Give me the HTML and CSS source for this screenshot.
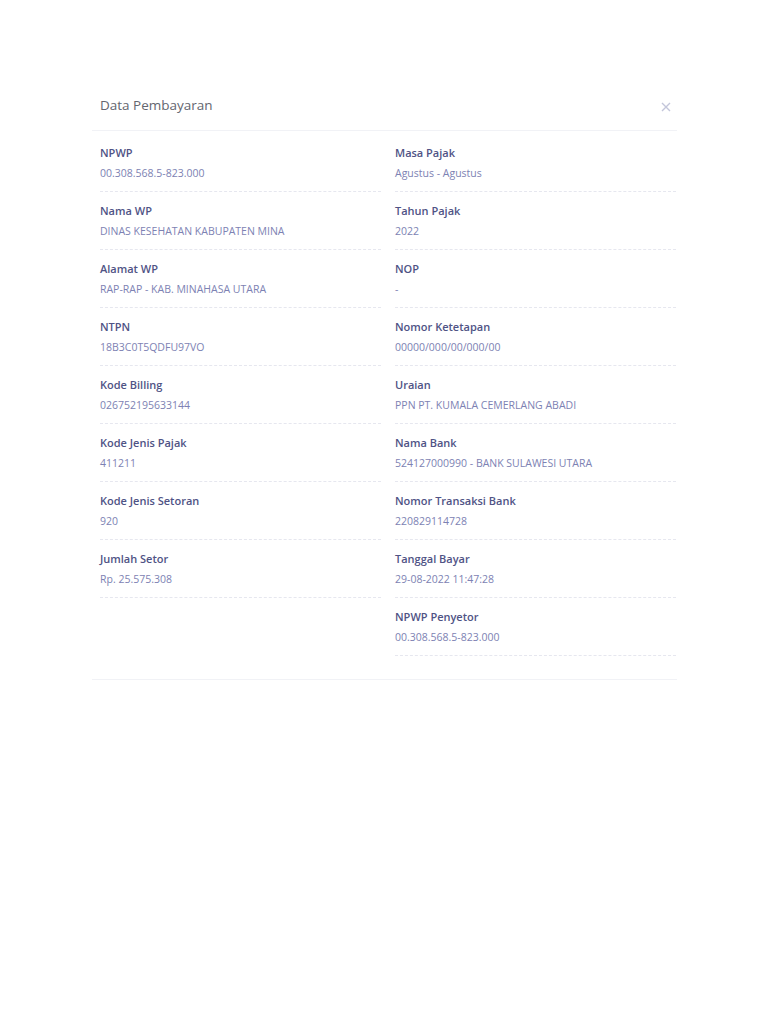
FILE: index.html
```html
<!DOCTYPE html>
<html lang="id">
<head>
    <meta charset="UTF-8">
    <meta name="viewport" content="width=device-width, initial-scale=1.0">
    <title>Data Pembayaran</title>
    <link rel="stylesheet" href="styles.css">
</head>
<body>
    <div class="modal">
        <div class="modal-header">
            <h5 class="modal-title">Data Pembayaran</h5>
            <button class="close" type="button" aria-label="Close">
                <svg width="10" height="10" viewBox="0 0 10 10"><path d="M1 1L9 9M9 1L1 9" stroke="#c3c6da" stroke-width="1.4" fill="none"/></svg>
            </button>
        </div>
        <div class="modal-body">
            <div class="col">
                <div class="item"><div class="label">NPWP</div><div class="value">00.308.568.5-823.000</div></div>
                <div class="item"><div class="label">Nama WP</div><div class="value">DINAS KESEHATAN KABUPATEN MINA</div></div>
                <div class="item"><div class="label">Alamat WP</div><div class="value">RAP-RAP - KAB. MINAHASA UTARA</div></div>
                <div class="item"><div class="label">NTPN</div><div class="value">18B3C0T5QDFU97VO</div></div>
                <div class="item"><div class="label">Kode Billing</div><div class="value">026752195633144</div></div>
                <div class="item"><div class="label">Kode Jenis Pajak</div><div class="value">411211</div></div>
                <div class="item"><div class="label">Kode Jenis Setoran</div><div class="value">920</div></div>
                <div class="item"><div class="label">Jumlah Setor</div><div class="value">Rp. 25.575.308</div></div>
            </div>
            <div class="col">
                <div class="item"><div class="label">Masa Pajak</div><div class="value">Agustus - Agustus</div></div>
                <div class="item"><div class="label">Tahun Pajak</div><div class="value">2022</div></div>
                <div class="item"><div class="label">NOP</div><div class="value">-</div></div>
                <div class="item"><div class="label">Nomor Ketetapan</div><div class="value">00000/000/00/000/00</div></div>
                <div class="item"><div class="label">Uraian</div><div class="value">PPN PT. KUMALA CEMERLANG ABADI</div></div>
                <div class="item"><div class="label">Nama Bank</div><div class="value">524127000990 - BANK SULAWESI UTARA</div></div>
                <div class="item"><div class="label">Nomor Transaksi Bank</div><div class="value">220829114728</div></div>
                <div class="item"><div class="label">Tanggal Bayar</div><div class="value">29-08-2022 11:47:28</div></div>
                <div class="item"><div class="label">NPWP Penyetor</div><div class="value">00.308.568.5-823.000</div></div>
            </div>
        </div>
        <div class="modal-footer"></div>
    </div>
</body>
</html>
```

FILE: styles.css
```css
body {
    margin: 0;
    padding: 0;
    background: #fff;
    font-family: 'Open Sans', 'Noto Sans', sans-serif;
}
.modal {
    width: 585px;
    margin: 84px 0 0 92px;
}
.modal-header {
    display: flex;
    justify-content: space-between;
    align-items: center;
    padding: 10px 8px 14px;
    border-bottom: 1px solid #f1f2f6;
}
.modal-title {
    margin: 0;
    font-size: 13.5px;
    line-height: 22px;
    font-weight: 400;
    color: #64666f;
}
.close {
    background: none;
    border: 0;
    padding: 0;
    margin-right: -2px;
    margin-top: 4px;
    width: 10px;
    height: 10px;
    display: flex;
}
.modal-body {
    display: grid;
    grid-template-columns: 281px 281px;
    column-gap: 14px;
    padding: 14px 0 12px 8px;
    align-items: start;
}
.item {
    padding-bottom: 10px;
    margin-bottom: 11px;
    border-bottom: 1px dashed #e6e7ef;
}
.label {
    font-size: 11px;
    line-height: 16px;
    font-weight: 600;
    color: #4f5385;
}
.value {
    margin-top: 4px;
    font-size: 10.5px;
    line-height: 16px;
    color: #7d82b3;
}
.modal-footer {
    border-top: 1px solid #f1f2f6;
    height: 20px;
}
```
